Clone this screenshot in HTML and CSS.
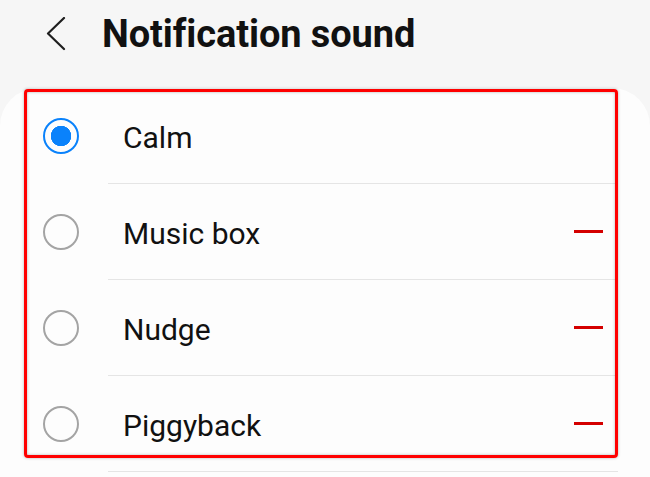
FILE: index.html
```html
<!DOCTYPE html>
<html lang="en">
<head>
    <meta charset="UTF-8">
    <meta name="viewport" content="width=device-width, initial-scale=1.0">
    <title>Notification sound</title>
    <link rel="stylesheet" href="styles.css">
</head>
<body>
    <div class="header">
        <svg class="back" width="20" height="34" viewBox="0 0 20 34">
            <polyline points="18,1 2,16.5 18,32" fill="none" stroke="#1e1e1e" stroke-width="2.2" stroke-linecap="round" stroke-linejoin="round"/>
        </svg>
        <h1>Notification sound</h1>
    </div>

    <div class="card">
        <div class="row">
            <span class="radio checked"></span>
            <div class="row-body">
                <span class="label">Calm</span>
            </div>
        </div>
        <div class="row">
            <span class="radio"></span>
            <div class="row-body">
                <span class="label">Music box</span>
                <span class="minus"></span>
            </div>
        </div>
        <div class="row">
            <span class="radio"></span>
            <div class="row-body">
                <span class="label">Nudge</span>
                <span class="minus"></span>
            </div>
        </div>
        <div class="row">
            <span class="radio"></span>
            <div class="row-body">
                <span class="label">Piggyback</span>
                <span class="minus"></span>
            </div>
        </div>

        <div class="highlight"></div>
    </div>
</body>
</html>
```

FILE: styles.css
```css
body {
    margin: 0;
    background: #f6f6f6;
    font-family: Roboto, "Noto Sans", sans-serif;
    color: #111;
    height: 477px;
    overflow: hidden;
}
.header {
    display: flex;
    align-items: center;
    height: 66px;
    padding-top: 1px;
    padding-left: 46px;
}
.header .back {
    margin-right: 36px;
}
.header h1 {
    margin: 0;
    font-size: 38px;
    font-weight: 700;
    letter-spacing: -0.1px;
}
.card {
    position: relative;
    margin-top: 21px;
    background: #fdfdfd;
    border-radius: 38px 38px 0 0;
    height: 389px;
}
.row {
    display: flex;
    align-items: center;
    height: 96px;
}
.radio {
    box-sizing: border-box;
    width: 36px;
    height: 36px;
    margin-left: 43px;
    margin-right: 29px;
    border-radius: 50%;
    border: 2px solid #a4a4a4;
    flex-shrink: 0;
}
.radio.checked {
    border: 2px solid #0a82fb;
    background: radial-gradient(circle, #0a82fb 0, #0a82fb 10px, transparent 10.5px);
}
.row-body {
    flex: 1;
    display: flex;
    align-items: center;
    justify-content: space-between;
    height: 100%;
    margin-right: 32px;
    padding: 0 15px;
    border-bottom: 1px solid #e5e5e5;
    box-sizing: border-box;
}
.label {
    font-size: 30px;
    padding-top: 4px;
}
.minus {
    width: 29px;
    height: 3px;
    background: #d40000;
}
.highlight {
    position: absolute;
    left: 24px;
    top: 1px;
    width: 594px;
    height: 369px;
    box-sizing: border-box;
    border: 3px solid #ff0000;
    border-radius: 4px;
    box-shadow: 0 0 3px rgba(0, 0, 0, 0.3), inset 0 0 3px rgba(0, 0, 0, 0.3);
}
```
